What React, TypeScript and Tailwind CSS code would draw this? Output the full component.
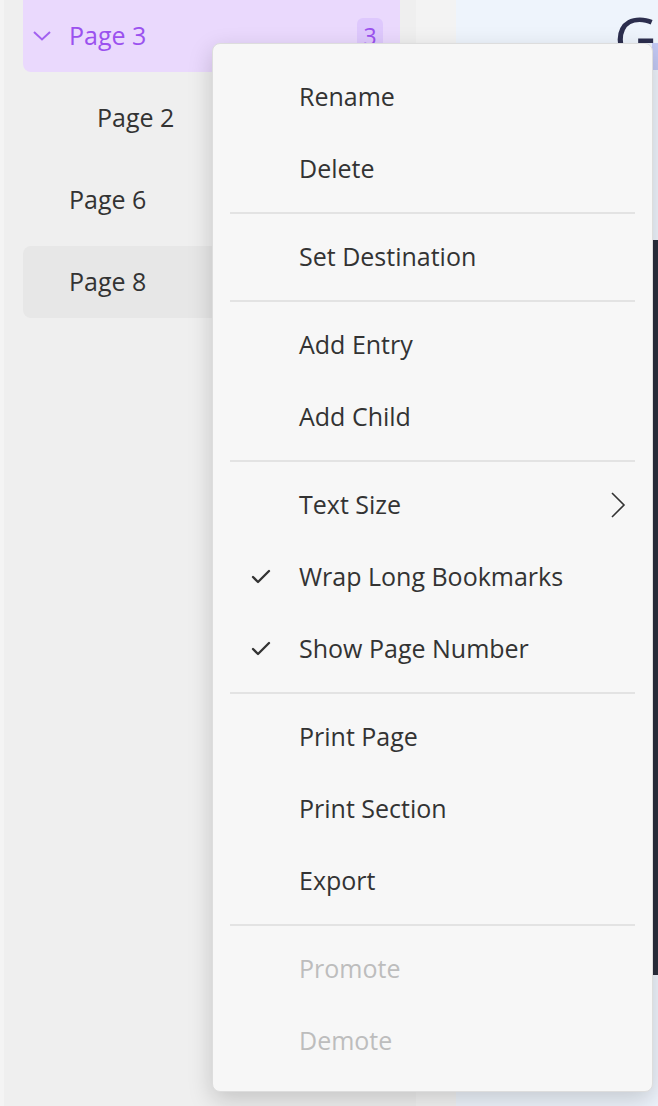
import { Check } from 'lucide-react'

type Item =
  | { kind: 'item'; label: string; checked?: boolean; submenu?: boolean; disabled?: boolean }
  | { kind: 'sep' }

/**
 * Bookmark sidebar with an open context menu
 */
export default function App() {
  const menu: Item[] = [
    { kind: 'item', label: 'Rename' },
    { kind: 'item', label: 'Delete' },
    { kind: 'sep' },
    { kind: 'item', label: 'Set Destination' },
    { kind: 'sep' },
    { kind: 'item', label: 'Add Entry' },
    { kind: 'item', label: 'Add Child' },
    { kind: 'sep' },
    { kind: 'item', label: 'Text Size', submenu: true },
    { kind: 'item', label: 'Wrap Long Bookmarks', checked: true },
    { kind: 'item', label: 'Show Page Number', checked: true },
    { kind: 'sep' },
    { kind: 'item', label: 'Print Page' },
    { kind: 'item', label: 'Print Section' },
    { kind: 'item', label: 'Export' },
    { kind: 'sep' },
    { kind: 'item', label: 'Promote', disabled: true },
    { kind: 'item', label: 'Demote', disabled: true },
  ]

  return (
    <div className="relative flex h-[1106px] w-[658px] overflow-hidden bg-[#eef4fc] font-['Open_Sans',sans-serif] text-[25px] text-[#333333]">
      {/* Sidebar */}
      <aside className="flex w-[416px] shrink-0 flex-col gap-[10px] border-l-4 border-[#f4f4f4] bg-[#efefef] pl-[19px] pr-[16px]">
        <div className="-mt-[8px] flex h-[80px] items-center rounded-lg bg-[#ead9fd] pt-[8px] pl-[10px] pr-[17px] text-[#9b51ef]">
          <svg width="18" height="10" viewBox="0 0 18 10" fill="none" className="mr-[18px]">
            <polyline points="1,1 9,8.5 17,1" stroke="#a261f0" strokeWidth="2" />
          </svg>
          <span className="flex-1">Page 3</span>
          <span className="flex h-[36px] w-[26px] items-center justify-center rounded-md bg-[#dec8fd] text-[23px]">3</span>
        </div>
        <div className="flex h-[72px] items-center pl-[74px]">Page 2</div>
        <div className="flex h-[72px] items-center pl-[46px]">Page 6</div>
        <div className="flex h-[72px] items-center rounded-lg bg-[#e7e7e7] pl-[46px]">Page 8</div>
      </aside>

      {/* Gap between sidebar and page */}
      <div className="w-[40px] shrink-0 bg-[#f3f3f3]" />

      {/* Page view */}
      <main className="flex flex-1 flex-col overflow-hidden pt-[8px]">
        <div className="ml-[158px] h-[35px] overflow-hidden whitespace-nowrap text-[60px] leading-none text-[#2c2e4e]">G</div>
        <div className="ml-[196px] h-[27px] bg-[#c3c9f4]" />
        <div className="ml-[196px] mt-[170px] h-[735px] bg-[#2a2f3d]" />
      </main>

      {/* Context menu */}
      <div className="absolute left-[212px] top-[43px] w-[441px] rounded-lg border border-[#dddddd] bg-[#f7f7f7] pt-[17px] pb-[14px] shadow-[0_8px_24px_rgba(0,0,0,0.18)]">
        {menu.map((entry, i) =>
          entry.kind === 'sep' ? (
            <div key={i} className="flex h-[16px] items-center px-[17px]">
              <div className="h-[2px] w-full bg-[#e3e3e3]" />
            </div>
          ) : (
            <div
              key={i}
              className={`flex h-[72px] items-center pl-[36px] pr-[26px] ${entry.disabled ? 'text-[#bdbdbd]' : 'text-[#333333]'}`}
            >
              <span className="flex w-[24px] shrink-0 justify-center">
                {entry.checked && <Check size={24} strokeWidth={2.3} color="#333333" />}
              </span>
              <span className="ml-[26px] flex-1 whitespace-nowrap">{entry.label}</span>
              {entry.submenu && (
                <svg width="16" height="26" viewBox="0 0 16 26" fill="none">
                  <polyline points="2,1 14,13 2,25" stroke="#333333" strokeWidth="1.6" />
                </svg>
              )}
            </div>
          ),
        )}
      </div>
    </div>
  )
}
